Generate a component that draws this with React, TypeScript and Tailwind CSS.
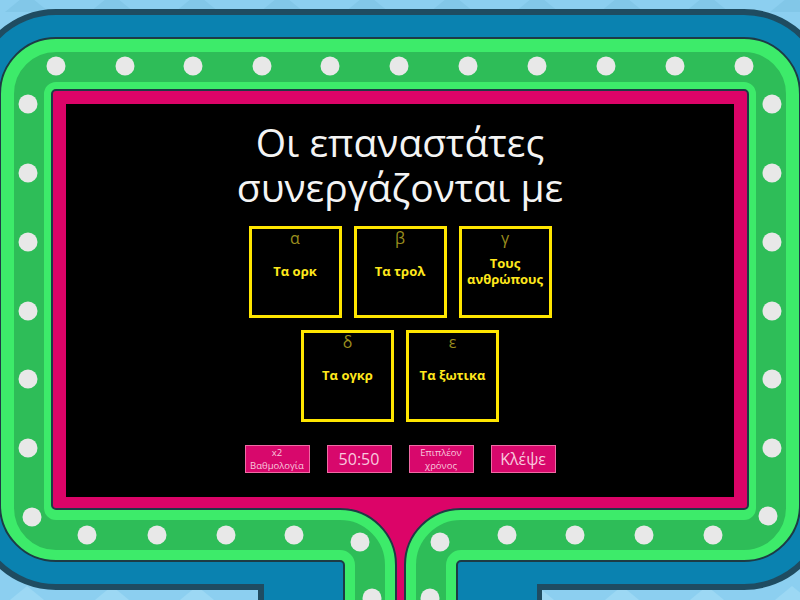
import React from "react";

const SL = 370;
const SR = 431;

// centre line of the green ring; o pulls it towards the screen
function ringPath(o: number) {
  const T = 64 + o;
  const L = 26 + o;
  const R = 774 - o;
  const B = 535;
  const r = 30 - o;
  return `M ${SL} 610 V 565 A 30 30 0 0 0 ${SL - 30} ${B} H ${L + r} A ${r} ${r} 0 0 1 ${L} ${B - r} V ${T + r} A ${r} ${r} 0 0 1 ${L + r} ${T} H ${R - r} A ${r} ${r} 0 0 1 ${R} ${T + r} V ${B - r} A ${r} ${r} 0 0 1 ${R - r} ${B} H ${SR + 30} A 30 30 0 0 0 ${SR} 565 V 610`;
}

const ring = ringPath(0);
const inner = ringPath(3);

const dots: [number, number][] = [
  [56, 66], [125, 66], [193, 66], [262, 66], [330, 66], [399, 66], [468, 66], [537, 66], [606, 66], [675, 66], [744, 66],
  [28, 104], [28, 173], [28, 242], [28, 311], [28, 379], [28, 448], [32, 517],
  [772, 104], [772, 173], [772, 242], [772, 311], [772, 379], [772, 448], [768, 516],
  [87, 535], [157, 535], [226, 535], [294, 535], [360, 542], [372, 598],
  [440, 542], [507, 535], [575, 535], [644, 535], [713, 535], [430, 598],
];

const spikes = [27, 112, 197, 282, 367, 452, 537, 622, 707, 792];

function Frame() {
  return (
    <svg className="absolute inset-0" width="800" height="600" viewBox="0 0 800 600">
      <rect width="800" height="600" fill="#8ccff0" />
      {spikes.map((x) => (
        <polygon key={"t" + x} points={`${x - 22},12 ${x},-6 ${x + 22},12`} fill="#7cc2e3" opacity="0.6" />
      ))}
      {spikes.map((x) => (
        <polygon key={"b" + x} points={`${x - 22},604 ${x},586 ${x + 22},604`} fill="#a2dbf5" opacity="0.7" />
      ))}
      <path d={ring} fill="none" stroke="#1f4c61" strokeWidth="110" />
      <path d={ring} fill="none" stroke="#0a82b0" strokeWidth="98" />
      <rect x="258" y="585" width={SL - 258} height="20" fill="#1f4c61" />
      <rect x="264" y="560" width={SL - 264} height="45" fill="#0a82b0" />
      <rect x={SR} y="585" width={542 - SR} height="20" fill="#1f4c61" />
      <rect x={SR} y="560" width={537 - SR} height="45" fill="#0a82b0" />
      <rect x="40" y="80" width="720" height="440" fill="#dc0468" />
      <rect x={SL} y="500" width={SR - SL} height="110" fill="#dc0468" />
      <path d={ring} fill="none" stroke="#1d3b45" strokeWidth="54" />
      <path d={ring} fill="none" stroke="#3deb6a" strokeWidth="50" />
      <path d={inner} fill="none" stroke="#2ebd58" strokeWidth="30" />
      {dots.map(([x, y]) => (
        <circle key={x + "-" + y} cx={x} cy={y} r="9.5" fill="#e8e8e8" />
      ))}
    </svg>
  );
}

const row1 = [
  { l: "α", t: "Τα ορκ" },
  { l: "β", t: "Τα τρολ" },
  { l: "γ", t: "Τους ανθρώπους" },
];
const row2 = [
  { l: "δ", t: "Τα ογκρ" },
  { l: "ε", t: "Τα ξωτικα" },
];

function Answer({ l, t }: { l: string; t: string }) {
  return (
    <div className="flex h-[92px] w-[93px] flex-col border-[3px] border-[#ffe600]">
      <div className="h-[22px] text-center text-[16px] leading-[18px] text-[#9a8e1e]">{l}</div>
      <div className="flex h-[40px] items-center justify-center px-1 text-center text-[13px] font-bold leading-[16px] text-[#ffe81c]">
        {t}
      </div>
    </div>
  );
}

const buttons = [
  { lines: ["x2", "Βαθμολογία"], small: true },
  { lines: ["50:50"], small: false },
  { lines: ["Επιπλέον", "χρόνος"], small: true },
  { lines: ["Κλέψε"], small: false },
];

export default function App() {
  return (
    <div className="relative h-[600px] w-[800px] overflow-hidden" style={{ fontFamily: '"Open Sans", "Noto Sans", sans-serif' }}>
      <Frame />
      <div className="relative pl-[66px] pt-[104px]">
        <div className="flex h-[393px] w-[668px] flex-col items-center bg-black">
          <h1 className="mt-[15px] text-center text-[39px] font-normal leading-[45px] text-[#f4f4f4]">
            Οι επαναστάτες
            <br />
            συνεργάζονται με
          </h1>
          <div className="mt-[17px] flex flex-col items-center gap-3">
            <div className="flex gap-3">
              {row1.map((a) => (
                <Answer key={a.l} {...a} />
              ))}
            </div>
            <div className="flex gap-3">
              {row2.map((a) => (
                <Answer key={a.l} {...a} />
              ))}
            </div>
          </div>
          <div className="mt-[23px] flex gap-[17px]">
            {buttons.map((b) => (
              <div
                key={b.lines.join()}
                className={`flex h-[28px] w-[65px] flex-col items-center justify-center border border-[#f06aa4] bg-[#d8086c] text-center text-[#f9c9de] ${
                  b.small ? "text-[9.5px] leading-[13px]" : "text-[16px] leading-[20px]"
                }`}
              >
                {b.lines.map((s) => (
                  <span key={s}>{s}</span>
                ))}
              </div>
            ))}
          </div>
        </div>
      </div>
    </div>
  );
}
